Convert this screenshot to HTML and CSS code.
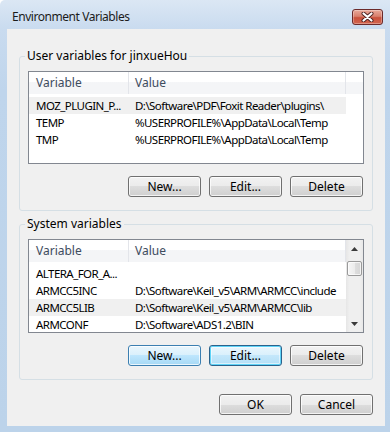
FILE: index.html
```html
<!DOCTYPE html>
<html lang="en">
<head>
<meta charset="utf-8">
<title>Environment Variables</title>
<link rel="stylesheet" href="styles.css">
</head>
<body>
<div class="window">
  <div class="titlebar">
    <span class="title">Environment Variables</span>
    <button class="close" aria-label="Close">
      <svg width="13" height="10" viewBox="0 0 13 10">
        <path d="M2.5 1.5 L10.5 8.5 M10.5 1.5 L2.5 8.5" stroke="#4a2020" stroke-width="4" stroke-linecap="round" fill="none"/>
        <path d="M2.5 1.5 L10.5 8.5 M10.5 1.5 L2.5 8.5" stroke="#ffffff" stroke-width="2.2" stroke-linecap="round" fill="none"/>
      </svg>
    </button>
  </div>
  <div class="client">
    <fieldset class="group">
      <legend>User variables for jinxueHou</legend>
      <div class="list list-user">
        <div class="list-main">
          <div class="list-head">
            <div class="hcell w1">Variable</div>
            <div class="hcell w2">Value</div>
            <div class="hcell filler"></div>
          </div>
          <div class="list-body">
            <div class="row sel"><span class="cell w1">MOZ_PLUGIN_P...</span><span class="cell w2">D:\Software\PDF\Foxit Reader\plugins\</span></div>
            <div class="row"><span class="cell w1">TEMP</span><span class="cell w2">%USERPROFILE%\AppData\Local\Temp</span></div>
            <div class="row"><span class="cell w1">TMP</span><span class="cell w2">%USERPROFILE%\AppData\Local\Temp</span></div>
          </div>
        </div>
      </div>
      <div class="btn-row">
        <button class="btn">New...</button>
        <button class="btn">Edit...</button>
        <button class="btn">Delete</button>
      </div>
    </fieldset>

    <fieldset class="group group-sys">
      <legend>System variables</legend>
      <div class="list list-sys">
        <div class="list-main">
          <div class="list-head">
            <div class="hcell w1">Variable</div>
            <div class="hcell w2">Value</div>
          </div>
          <div class="list-body">
            <div class="row"><span class="cell w1">ALTERA_FOR_A...</span><span class="cell w2"></span></div>
            <div class="row"><span class="cell w1">ARMCC5INC</span><span class="cell w2">D:\Software\Keil_v5\ARM\ARMCC\include</span></div>
            <div class="row sel"><span class="cell w1">ARMCC5LIB</span><span class="cell w2">D:\Software\Keil_v5\ARM\ARMCC\lib</span></div>
            <div class="row"><span class="cell w1">ARMCONF</span><span class="cell w2">D:\Software\ADS1.2\BIN</span></div>
          </div>
        </div>
        <div class="scrollbar">
          <div class="sb-btn">
            <svg width="7" height="4" viewBox="0 0 7 4"><path d="M0 4 L3.5 0 L7 4 Z" fill="#3a3a3a"/></svg>
          </div>
          <div class="sb-track"><div class="sb-thumb"></div></div>
          <div class="sb-btn">
            <svg width="7" height="4" viewBox="0 0 7 4"><path d="M0 0 L3.5 4 L7 0 Z" fill="#3a3a3a"/></svg>
          </div>
        </div>
      </div>
      <div class="btn-row">
        <button class="btn btn-hover">New...</button>
        <button class="btn btn-focus">Edit...</button>
        <button class="btn">Delete</button>
      </div>
    </fieldset>

    <div class="dialog-btns">
      <button class="btn">OK</button>
      <button class="btn">Cancel</button>
    </div>
  </div>
</div>
</body>
</html>
```

FILE: styles.css
```css
* {
  box-sizing: border-box;
}

html,
body {
  margin: 0;
  padding: 0;
}

body {
  width: 390px;
  height: 432px;
  overflow: hidden;
  background: #ffffff;
  font-family: "Noto Sans", "Open Sans", "DejaVu Sans", sans-serif;
  font-size: 12px;
  color: #000000;
}

.window {
  width: 390px;
  height: 432px;
  display: flex;
  flex-direction: column;
  padding: 0 5px 6px 7px;
  background: linear-gradient(#dbe7f4 0px, #c9dbef 29px, #bfd5ec 90px, #bcd3ea 100%);
  border-top-left-radius: 5px;
}

.titlebar {
  flex: none;
  height: 29px;
  display: flex;
  align-items: center;
  padding: 5px 2px 0 5px;
}

.title {
  flex: 1;
  line-height: 16px;
  letter-spacing: -0.45px;
  color: #1b1b1b;
}

.close {
  width: 31px;
  height: 16px;
  padding: 0;
  display: flex;
  align-items: center;
  justify-content: center;
  border: 1px solid #6b2a2a;
  border-radius: 3px;
  background: linear-gradient(#e9a99a 0%, #d9806d 45%, #c9503b 55%, #d2654f 100%);
  box-shadow: inset 0 0 0 1px rgba(255, 255, 255, 0.3);
}

.client {
  flex: 1;
  display: flex;
  flex-direction: column;
  background: #f0f0f0;
  padding: 19px 12px 0 12px;
}

.group {
  margin: 0;
  padding: 7px 8px 13px 8px;
  border: 1px solid #d5dfe5;
  border-radius: 3px;
  min-width: 0;
}

.group legend {
  padding: 0 2px;
  margin-left: -3px;
  line-height: 16px;
}

.group-sys {
  margin-top: 5px;
}

.list {
  display: flex;
  border: 1px solid #828790;
  background: #ffffff;
  overflow: hidden;
}

.list-user {
  height: 93px;
}

.list-sys {
  height: 94px;
}

.list-main {
  flex: 1;
  min-width: 0;
  display: flex;
  flex-direction: column;
}

.list-head {
  flex: none;
  display: flex;
  height: 22px;
  background: linear-gradient(#ffffff 0%, #ffffff 44%, #f4f5f7 48%, #f4f5f7 100%);
}

.hcell {
  line-height: 22px;
  padding-left: 7px;
  color: #3e4c5e;
  border-right: 1px solid #e3e5ea;
  white-space: nowrap;
}

.hcell.w2 {
  padding-left: 6px;
}

.hcell.filler {
  flex: 1;
  border-right: none;
}

.w1 {
  flex: none;
  width: 100px;
}

.w2 {
  flex: none;
  width: 217px;
}

.list-body {
  padding-top: 3px;
}

.row {
  display: flex;
  width: 317px;
  height: 17px;
  line-height: 17px;
  font-size: 11.5px;
  letter-spacing: -0.55px;
}

.row.sel {
  background: #f0f0f0;
}

.cell {
  white-space: nowrap;
  overflow: hidden;
  padding-left: 7px;
}

.cell.w2 {
  padding-left: 6px;
}

.scrollbar {
  flex: none;
  width: 17px;
  display: flex;
  flex-direction: column;
  background: linear-gradient(90deg, #e6e6e6 0%, #efefef 20%, #efefef 80%, #e8e8e8 100%);
}

.sb-btn {
  flex: none;
  height: 17px;
  display: flex;
  align-items: center;
  justify-content: center;
}

.sb-track {
  flex: 1;
  padding: 4px 1px 0 1px;
}

.sb-thumb {
  height: 15px;
  border: 1px solid #9a9a9a;
  border-radius: 2px;
  background: linear-gradient(90deg, #f6f6f6 0%, #ececec 50%, #dedede 52%, #d6d6d6 100%);
  box-shadow: inset 0 0 0 1px rgba(255, 255, 255, 0.7);
}

.btn-row,
.dialog-btns {
  display: flex;
  justify-content: flex-end;
  gap: 8px;
}

.btn-row {
  margin-top: 12px;
  padding-right: 1px;
}

.dialog-btns {
  margin-top: 14px;
}

.btn {
  width: 73px;
  height: 21px;
  padding: 0;
  font-family: inherit;
  font-size: 12px;
  line-height: 19px;
  color: #000000;
  border: 1px solid #707070;
  border-radius: 3px;
  background: linear-gradient(#f2f2f2 0%, #ebebeb 50%, #dddddd 50%, #cfcfcf 100%);
  box-shadow: inset 0 0 0 1px rgba(255, 255, 255, 0.75);
}

.btn-hover {
  border-color: #3c7fb1;
  background: linear-gradient(#eaf6fd 0%, #d9f0fc 50%, #bee6fd 50%, #a7d9f5 100%);
}

.btn-focus {
  border-color: #2c628b;
  background: linear-gradient(#eaf6fd 0%, #d9f0fc 50%, #c4e7fb 50%, #b3dff6 100%);
  box-shadow: inset 0 0 0 1px #5ed3f7, inset 0 0 0 2px rgba(255, 255, 255, 0.5);
}
```
